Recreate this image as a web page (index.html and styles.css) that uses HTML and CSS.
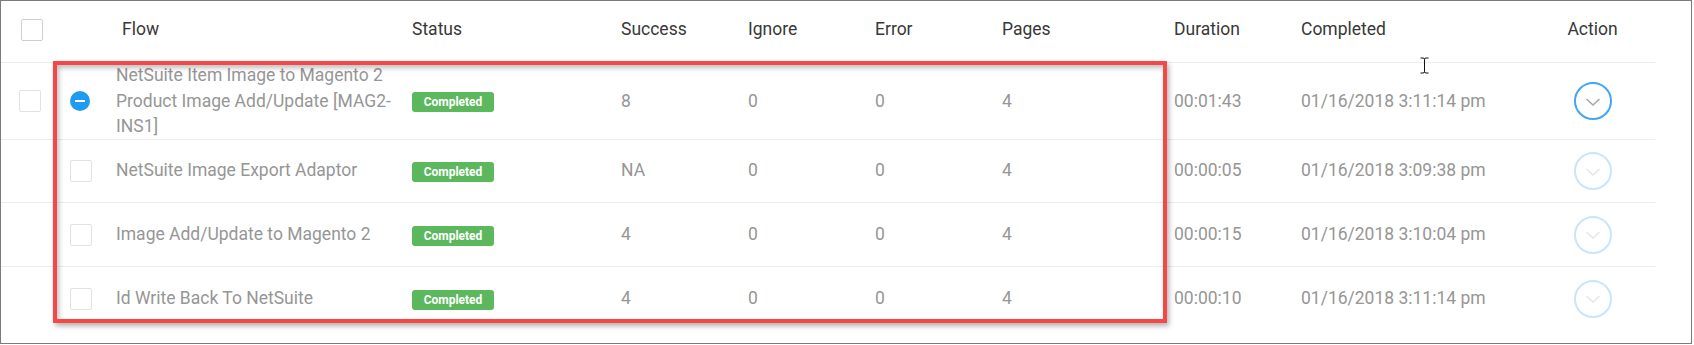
FILE: index.html
```html
<!DOCTYPE html>
<html lang="en">
<head>
<meta charset="utf-8">
<title>Flows</title>
<link rel="stylesheet" href="styles.css">
</head>
<body>
<div class="frame">
  <div class="table">
    <div class="row head">
      <div class="cell sel"><span class="box box-head"></span></div>
      <div class="cell tog"></div>
      <div class="cell flow flow-head">Flow</div>
      <div class="cell">Status</div>
      <div class="cell">Success</div>
      <div class="cell">Ignore</div>
      <div class="cell">Error</div>
      <div class="cell">Pages</div>
      <div class="cell">Duration</div>
      <div class="cell">Completed</div>
      <div class="cell act">Action</div>
    </div>

    <div class="row body r1">
      <div class="cell sel"><span class="box box-row"></span></div>
      <div class="cell tog"><span class="minus"></span></div>
      <div class="cell flow">NetSuite Item Image to Magento 2 Product Image Add/Update [MAG2-INS1]</div>
      <div class="cell"><span class="badge">Completed</span></div>
      <div class="cell">8</div>
      <div class="cell">0</div>
      <div class="cell">0</div>
      <div class="cell">4</div>
      <div class="cell">00:01:43</div>
      <div class="cell">01/16/2018 3:11:14 pm</div>
      <div class="cell act"><span class="circ"><svg width="16" height="10" viewBox="0 0 16 10"><polyline points="1.5,2 8,8 14.5,2" fill="none" stroke="#a8a8a8" stroke-width="1.6"/></svg></span></div>
    </div>

    <div class="row body r2">
      <div class="cell sel"></div>
      <div class="cell tog"><span class="box box-child"></span></div>
      <div class="cell flow">NetSuite Image Export Adaptor</div>
      <div class="cell"><span class="badge">Completed</span></div>
      <div class="cell">NA</div>
      <div class="cell">0</div>
      <div class="cell">0</div>
      <div class="cell">4</div>
      <div class="cell">00:00:05</div>
      <div class="cell">01/16/2018 3:09:38 pm</div>
      <div class="cell act"><span class="circ faded"><svg width="16" height="10" viewBox="0 0 16 10"><polyline points="1.5,2 8,8 14.5,2" fill="none" stroke="#a8a8a8" stroke-width="1.6"/></svg></span></div>
    </div>

    <div class="row body r3">
      <div class="cell sel"></div>
      <div class="cell tog"><span class="box box-child"></span></div>
      <div class="cell flow">Image Add/Update to Magento 2</div>
      <div class="cell"><span class="badge">Completed</span></div>
      <div class="cell">4</div>
      <div class="cell">0</div>
      <div class="cell">0</div>
      <div class="cell">4</div>
      <div class="cell">00:00:15</div>
      <div class="cell">01/16/2018 3:10:04 pm</div>
      <div class="cell act"><span class="circ faded"><svg width="16" height="10" viewBox="0 0 16 10"><polyline points="1.5,2 8,8 14.5,2" fill="none" stroke="#a8a8a8" stroke-width="1.6"/></svg></span></div>
    </div>

    <div class="row body r4">
      <div class="cell sel"></div>
      <div class="cell tog"><span class="box box-child"></span></div>
      <div class="cell flow">Id Write Back To NetSuite</div>
      <div class="cell"><span class="badge">Completed</span></div>
      <div class="cell">4</div>
      <div class="cell">0</div>
      <div class="cell">0</div>
      <div class="cell">4</div>
      <div class="cell">00:00:10</div>
      <div class="cell">01/16/2018 3:11:14 pm</div>
      <div class="cell act"><span class="circ faded"><svg width="16" height="10" viewBox="0 0 16 10"><polyline points="1.5,2 8,8 14.5,2" fill="none" stroke="#a8a8a8" stroke-width="1.6"/></svg></span></div>
    </div>
  </div>

  <div class="highlight"></div>
  <svg class="cursor" width="9" height="17" viewBox="0 0 9 17">
    <path d="M0.5 1 H3 Q4.5 1 4.5 2.5 Q4.5 1 6 1 H8.5 M4.5 2.5 V14.5 M0.5 16 H3 Q4.5 16 4.5 14.5 Q4.5 16 6 16 H8.5" fill="none" stroke="#111" stroke-width="1"/>
  </svg>
</div>
</body>
</html>
```

FILE: styles.css
```css
* { box-sizing: border-box; }

html, body {
  margin: 0;
  padding: 0;
  background: #ffffff;
}

body {
  font-family: Roboto, "Liberation Sans", Arial, sans-serif;
  font-size: 17.5px;
  color: #969696;
}

.frame {
  position: relative;
  width: 1692px;
  height: 344px;
  border: 1px solid #7b7b7b;
  background: #fff;
  overflow: hidden;
}

.table {
  width: 1654px;
}

.row {
  display: grid;
  grid-template-columns: 59px 56px 296px 209px 127px 127px 127px 172px 127px 229px 125px;
  align-items: center;
  border-bottom: 1px solid #ececec;
}

.head {
  height: 62px;
  padding-bottom: 4px;
  color: #383838;
}

.r1 { height: 77px; }
.r2 { height: 63px; }
.r3 { height: 64px; }
.r4 { height: 63px; border-bottom: none; }

.cell {
  display: flex;
  align-items: center;
  line-height: 25.5px;
}

.flow {
  padding-right: 11px;
}

.flow-head {
  padding-left: 6px;
}

.act {
  justify-content: center;
}

.box {
  display: inline-block;
  width: 22px;
  height: 22px;
  border: 1px solid #d6d6d6;
  border-radius: 2px;
  background: #fff;
}

.box-head {
  margin-left: 20px;
  border-color: #cfcfcf;
}

.box-row {
  margin-left: 18px;
  border-color: #e2e2e2;
}

.box-child {
  margin-left: 10px;
  border-color: #e2e2e2;
}

.minus {
  position: relative;
  display: inline-block;
  width: 20px;
  height: 20px;
  margin-left: 10px;
  border-radius: 50%;
  background: #1f9bf0;
}

.minus::after {
  content: "";
  position: absolute;
  left: 5px;
  top: 9px;
  width: 10px;
  height: 2px;
  background: #fff;
}

.badge {
  display: inline-block;
  width: 82px;
  height: 20px;
  line-height: 20px;
  text-align: center;
  border-radius: 3px;
  background: #5cb85c;
  color: #fff;
  font-size: 12px;
  font-weight: 700;
  margin-top: 2px;
}

.circ {
  display: inline-flex;
  align-items: center;
  justify-content: center;
  width: 38px;
  height: 38px;
  border: 2px solid #42a5f5;
  border-radius: 50%;
}

.circ svg {
  margin-top: 1px;
}

.circ.faded {
  opacity: 0.28;
}

.highlight {
  position: absolute;
  left: 52px;
  top: 60px;
  width: 1114px;
  height: 262px;
  border: 4px solid #f64646;
  box-shadow: 2px 3px 5px rgba(0, 0, 0, 0.3), inset 2px 3px 5px rgba(0, 0, 0, 0.25);
  pointer-events: none;
}

.cursor {
  position: absolute;
  left: 1419px;
  top: 56px;
}
```
